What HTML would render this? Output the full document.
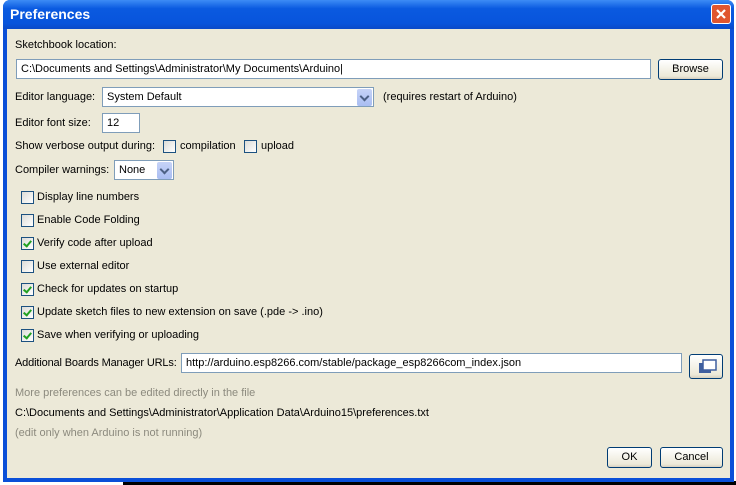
<!DOCTYPE html><html><head><style>
*{margin:0;padding:0;box-sizing:border-box}
body{width:736px;height:485px;position:relative;overflow:hidden;background:#fff;font-family:"Liberation Sans",sans-serif;font-size:11px;color:#000}
.a{position:absolute;white-space:nowrap}
.dlg{position:absolute;left:3px;top:0;width:731px;height:482px;background:#0a4fd8;border-radius:7px 7px 0 0}
.title{position:absolute;left:0;top:0;width:731px;height:29px;border-radius:7px 7px 0 0;background:linear-gradient(#3d8cf5,#0a5ae0 30%,#0854dc 80%,#0a4ac8)}
.body{position:absolute;left:4px;top:29px;width:723px;height:449px;background:#ece9d8}
.tb{position:absolute;background:#fff;border:1px solid #7f9db9;padding:0 4px;line-height:19px}
.btn{position:absolute;border:1px solid #003c74;border-radius:3px;background:linear-gradient(#fff,#ece9d8 85%,#d6d0c0);text-align:center;line-height:19px}
.cb{position:absolute;width:13px;height:13px;border:1px solid #1c5180;background:linear-gradient(135deg,#dcdcd7,#fff)}
.cb.c::after{content:"";position:absolute;left:3px;top:1px;width:3px;height:6px;border:solid #21a121;border-width:0 2px 2px 0;transform:rotate(40deg)}
.dd{position:absolute;width:15px;height:17px;right:1px;top:1px;background:linear-gradient(#c6d3f7,#a9bdf2);border-radius:2px}
.dd::after{content:"";position:absolute;left:4px;top:4px;width:5px;height:5px;border:solid #4d6185;border-width:0 2px 2px 0;transform:rotate(45deg)}
.g{color:#8c8a7e}
</style></head><body>
<div class="a" style="left:123px;top:481px;width:613px;height:4px;background:#000"></div>
<div class="dlg"><div class="title"></div>
<div class="a" style="left:7px;top:6px;color:#fff;font-weight:bold;font-size:14px">Preferences</div>
<div class="a" style="left:708px;top:4px;width:20px;height:20px;border:1px solid #fff;border-radius:3px;background:#e0552f"><svg width="18" height="18" style="position:absolute;left:0;top:0"><path d="M5 5L13 13M13 5L5 13" stroke="#fff" stroke-width="2.2"/></svg></div>
<div class="body"></div></div>
<div class="a" style="left:15px;top:39px">Sketchbook location:</div>
<div class="tb" style="left:16px;top:59px;width:635px;height:20px">C:\Documents and Settings\Administrator\My Documents\Arduino|</div>
<div class="btn" style="left:658px;top:59px;width:65px;height:21px">Browse</div>
<div class="a" style="left:15px;top:91px">Editor language:</div>
<div class="tb" style="left:102px;top:87px;width:272px;height:20px">System Default<div class="dd"></div></div>
<div class="a" style="left:383px;top:91px">(requires restart of Arduino)</div>
<div class="a" style="left:15px;top:117px">Editor font size:</div>
<div class="tb" style="left:102px;top:113px;width:38px;height:20px">12</div>
<div class="a" style="left:15px;top:140px">Show verbose output during:</div>
<div class="cb" style="left:163px;top:140px"></div><div class="a" style="left:180px;top:140px">compilation</div>
<div class="cb" style="left:244px;top:140px"></div><div class="a" style="left:261px;top:140px">upload</div>
<div class="a" style="left:15px;top:164px">Compiler warnings:</div>
<div class="tb" style="left:114px;top:160px;width:60px;height:20px">None<div class="dd"></div></div>
<div class="cb" style="left:21px;top:191px"></div><div class="a" style="left:37px;top:191px">Display line numbers</div>
<div class="cb" style="left:21px;top:214px"></div><div class="a" style="left:37px;top:214px">Enable Code Folding</div>
<div class="cb c" style="left:21px;top:237px"></div><div class="a" style="left:37px;top:237px">Verify code after upload</div>
<div class="cb" style="left:21px;top:260px"></div><div class="a" style="left:37px;top:260px">Use external editor</div>
<div class="cb c" style="left:21px;top:283px"></div><div class="a" style="left:37px;top:283px">Check for updates on startup</div>
<div class="cb c" style="left:21px;top:306px"></div><div class="a" style="left:37px;top:306px">Update sketch files to new extension on save (.pde -&gt; .ino)</div>
<div class="cb c" style="left:21px;top:329px"></div><div class="a" style="left:37px;top:329px">Save when verifying or uploading</div>
<div class="a" style="left:15px;top:357px;letter-spacing:-0.15px">Additional Boards Manager URLs:</div>
<div class="tb" style="left:181px;top:353px;width:501px;height:20px">http://arduino.esp8266.com/stable/package_esp8266com_index.json</div>
<div class="btn" style="left:689px;top:354px;width:34px;height:25px"><svg width="32" height="23" style="position:absolute;left:0;top:0"><rect x="9" y="8" width="12" height="10" fill="#3f5f9f"/><rect x="13" y="5" width="13" height="10" fill="#fff" stroke="#3f5f9f" stroke-width="1.5"/></svg></div>
<div class="a g" style="left:15px;top:387px">More preferences can be edited directly in the file</div>
<div class="a" style="left:15px;top:407px">C:\Documents and Settings\Administrator\Application Data\Arduino15\preferences.txt</div>
<div class="a g" style="left:15px;top:427px">(edit only when Arduino is not running)</div>
<div class="btn" style="left:607px;top:447px;width:45px;height:21px">OK</div>
<div class="btn" style="left:660px;top:447px;width:63px;height:21px">Cancel</div>
</body></html>
